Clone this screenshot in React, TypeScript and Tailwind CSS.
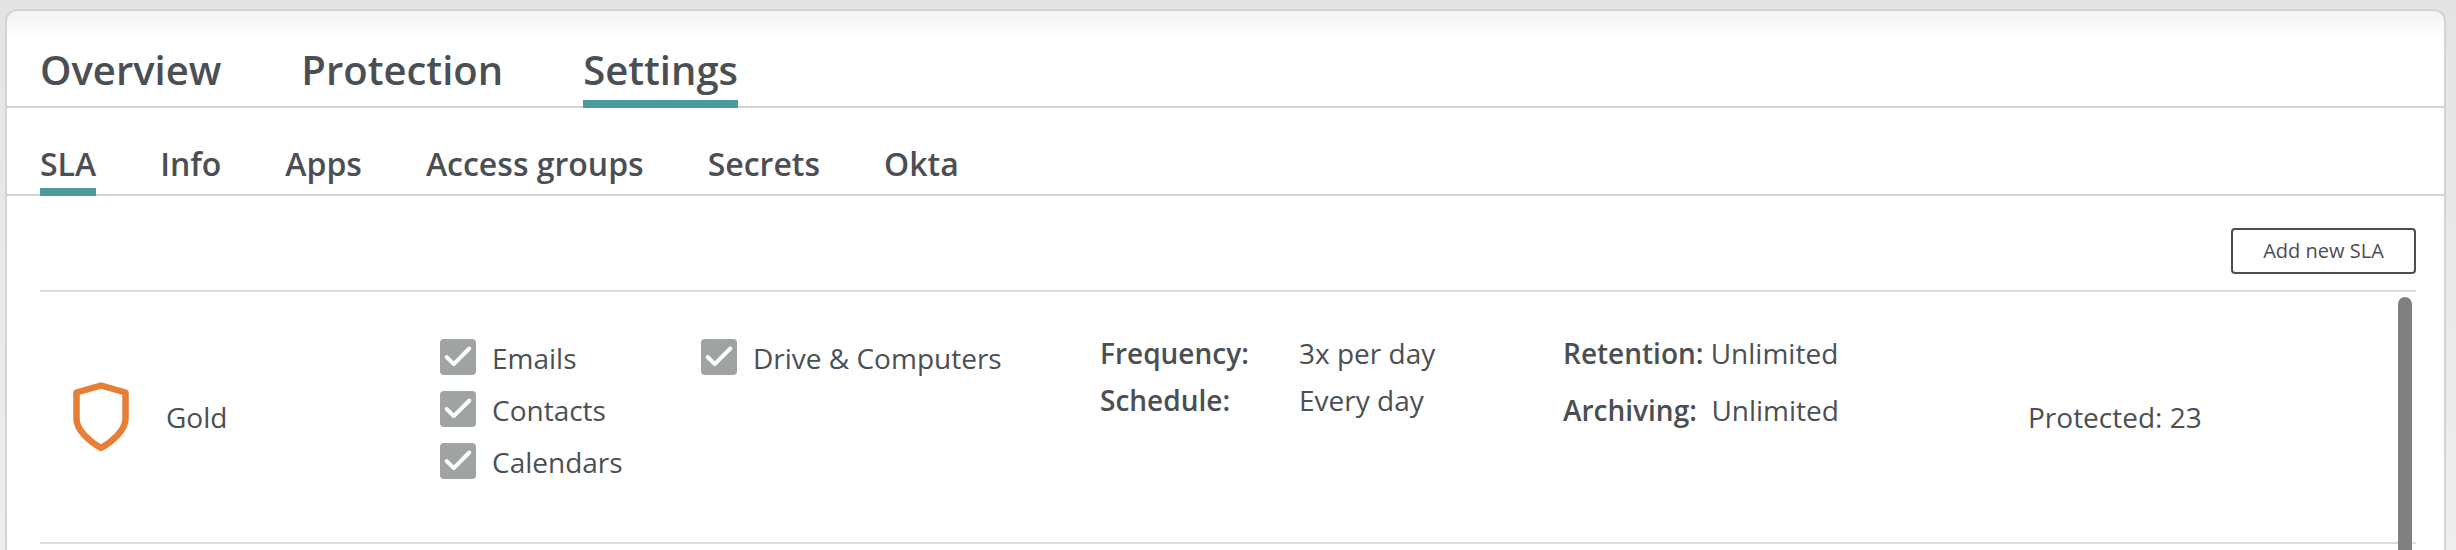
import { Check } from "lucide-react";

const mainTabs = ["Overview", "Protection", "Settings"];
const subTabs = ["SLA", "Info", "Apps", "Access groups", "Secrets", "Okta"];

function ShieldIcon() {
  return (
    <svg width="58" height="70" viewBox="0 0 58 70" fill="none">
      <path
        d="M29 3.5 L53.5 10.5 V37 C53.5 48 40 60 29 66 C18 60 4.5 48 4.5 37 V10.5 Z"
        stroke="#e67e36"
        strokeWidth="6.5"
        strokeLinejoin="round"
      />
    </svg>
  );
}

function Service({ label }: { label: string }) {
  return (
    <div className="flex h-[36px] items-center gap-[16px]">
      <div className="flex h-[36px] w-[36px] items-center justify-center rounded-[4px] bg-[#a0a3a3]">
        <Check size={34} color="#ffffff" strokeWidth={2.8} />
      </div>
      <span className="pt-[2px] text-[28px] leading-[36px]">{label}</span>
    </div>
  );
}

export default function App() {
  return (
    <div className="h-[550px] w-[2456px] overflow-hidden bg-gradient-to-b from-[#e4e4e4] to-[#eeeeee] pl-[5px] pr-[10px] pt-[9px] font-['Open_Sans',sans-serif] text-[#4b4f54]">
      <div className="h-[560px] rounded-t-[12px] border-x-[2px] border-t-[2px] border-[#d4d4d4] bg-white bg-gradient-to-b from-[#f3f3f3] to-white to-[28px]">
        <div className="flex h-[97px] gap-[80px] border-b-[2px] border-[#d4d4d4] pl-[33px]">
          {mainTabs.map((tab) => (
            <div
              key={tab}
              className={
                "-mb-[2px] h-[97px] pt-[33px] text-[40px] font-semibold leading-[52px] " +
                (tab === "Settings" ? "border-b-[8px] border-[#4b9d9d]" : "")
              }
            >
              {tab}
            </div>
          ))}
        </div>
        <div className="flex h-[88px] gap-[64px] border-b-[2px] border-[#d4d4d4] pl-[33px]">
          {subTabs.map((tab) => (
            <div
              key={tab}
              className={
                "-mb-[2px] h-[88px] pt-[35px] text-[32px] font-semibold leading-[42px] " +
                (tab === "SLA" ? "border-b-[8px] border-[#4b9d9d]" : "")
              }
            >
              {tab}
            </div>
          ))}
        </div>
        <div className="pl-[33px] pr-[28px]">
          <div className="flex h-[96px] justify-end border-b-[2px] border-[#dedede] pt-[32px]">
            <button className="h-[46px] w-[185px] rounded-[4px] border-[2px] border-[#4b4f54] text-[20px]">
              Add new SLA
            </button>
          </div>
          <div className="relative flex h-[252px] items-start border-b-[2px] border-[#dedede]">
            <div className="flex w-[400px] items-center gap-[36px] pl-[32px] pt-[90px]">
              <ShieldIcon />
              <span className="text-[28px] leading-[36px]">Gold</span>
            </div>
            <div className="flex w-[261px] flex-col gap-[16px] pt-[47px]">
              <Service label="Emails" />
              <Service label="Contacts" />
              <Service label="Calendars" />
            </div>
            <div className="w-[399px] pt-[47px]">
              <Service label="Drive &amp; Computers" />
            </div>
            <div className="grid w-[463px] grid-cols-[199px_1fr] gap-y-[11px] pt-[43px] text-[28px] leading-[36px]">
              <span className="font-semibold">Frequency:</span>
              <span>3x per day</span>
              <span className="font-semibold">Schedule:</span>
              <span>Every day</span>
            </div>
            <div className="flex w-[465px] flex-col gap-[21px] pt-[43px] text-[28px] leading-[36px]">
              <div>
                <span className="font-semibold">Retention:</span> Unlimited
              </div>
              <div>
                <span className="font-semibold">Archiving:</span>&nbsp; Unlimited
              </div>
            </div>
            <div className="pt-[107px] text-[28px] leading-[36px]">Protected: 23</div>
            <div className="absolute right-[4px] top-[5px] h-[300px] w-[14px] rounded-t-[7px] bg-[#808080]" />
          </div>
        </div>
      </div>
    </div>
  );
}
